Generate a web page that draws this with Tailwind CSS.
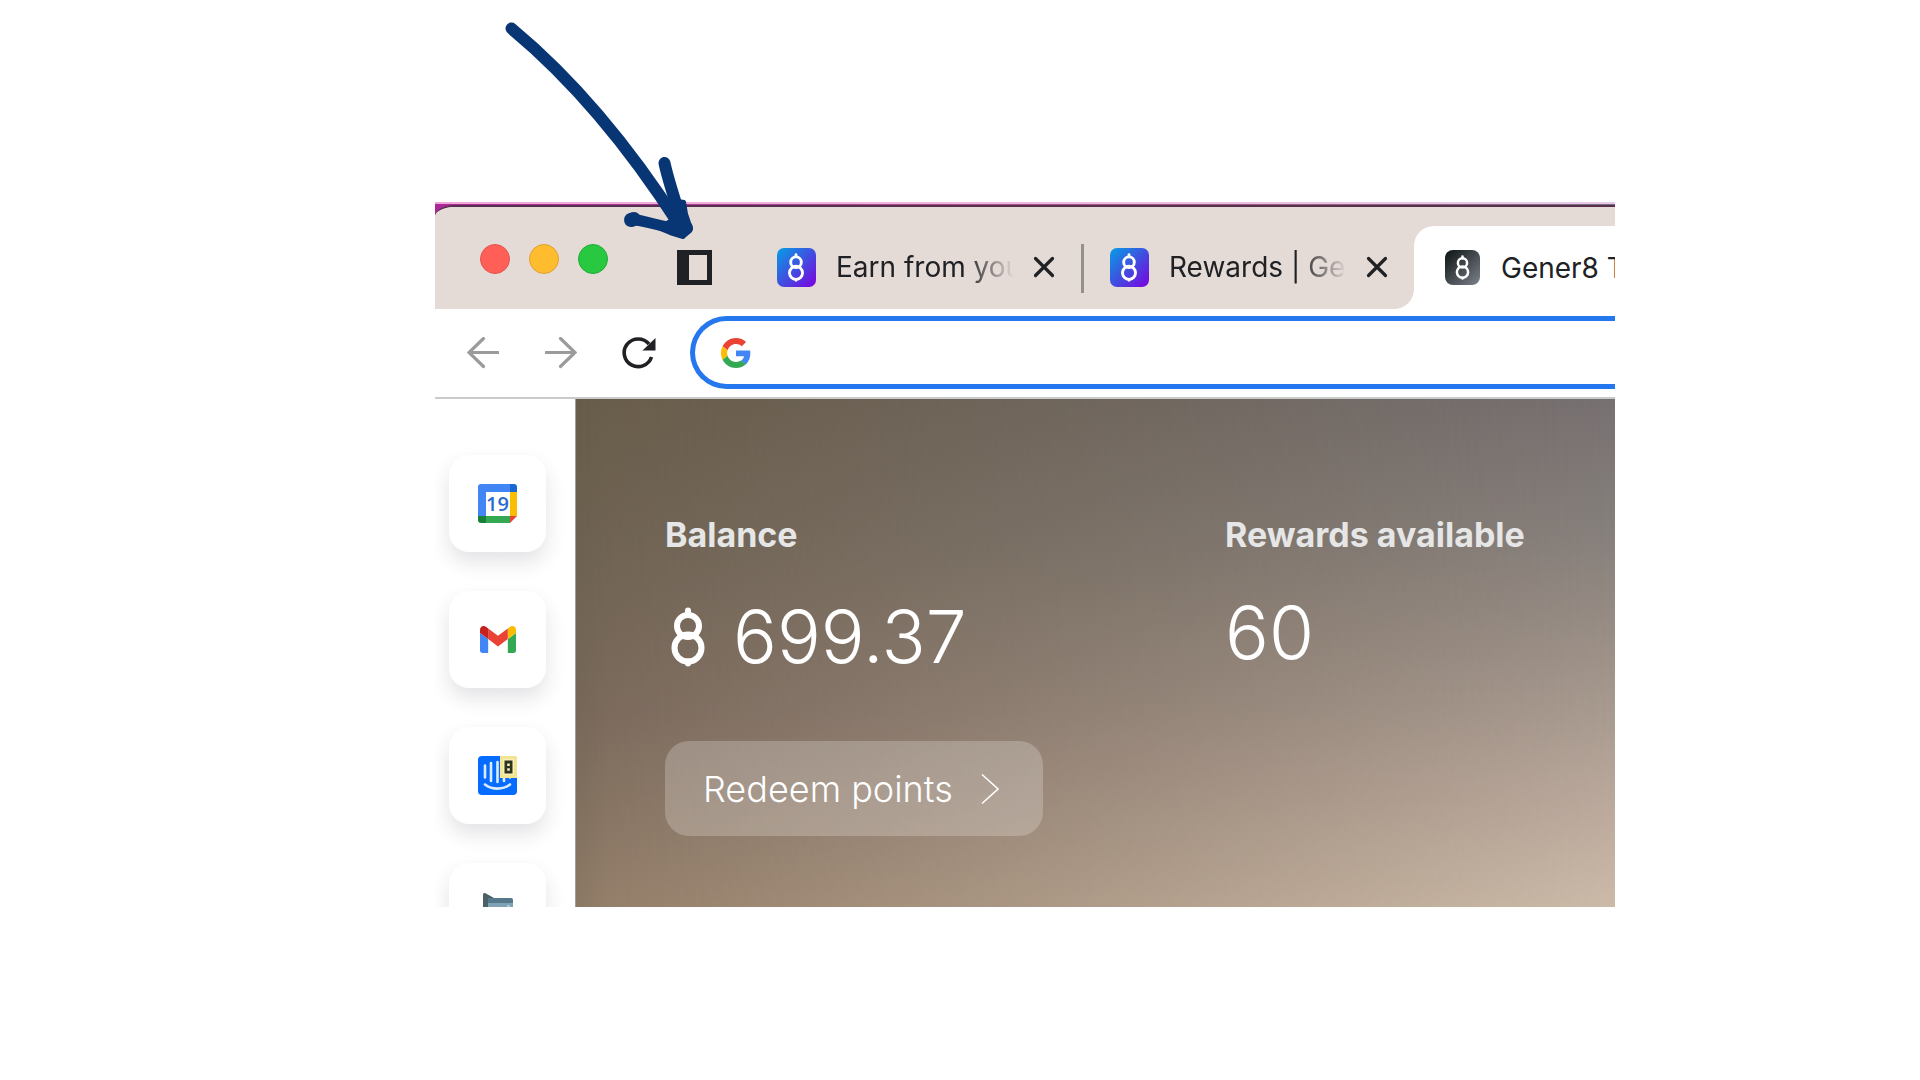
<!DOCTYPE html>
<html lang="en">
<head>
  <meta charset="utf-8">
  <meta name="viewport" content="width=device-width, initial-scale=1">
  <title>Gener8 Tab</title>
  <script src="https://cdn.jsdelivr.net/npm/@tailwindcss/browser@4"></script>
</head>
<body class="relative flex h-screen overflow-hidden bg-white pt-[202px] pr-[305px] pb-[173px] pl-[435px] font-['Inter',sans-serif]">

  <!-- shared symbols -->
  <svg class="absolute size-0" aria-hidden="true">
    <defs>
      <linearGradient id="brand" x1="0" y1="0" x2="1" y2="1">
        <stop offset="0" stop-color="#069ee6"/>
        <stop offset=".5" stop-color="#3f50e0"/>
        <stop offset="1" stop-color="#7d00e0"/>
      </linearGradient>
      <linearGradient id="dark" x1="0" y1="0" x2="1" y2="1">
        <stop offset="0" stop-color="#0b1211"/>
        <stop offset="1" stop-color="#7d828c"/>
      </linearGradient>
    </defs>
    <symbol id="eight" viewBox="0 0 34 60">
      <g fill="none" stroke="currentColor" stroke-width="6" stroke-linecap="round">
        <circle cx="17" cy="19" r="11"/>
        <circle cx="17" cy="41" r="13.500"/>
        <path d="M17 3.500v4M17 54.500v2"/>
      </g>
    </symbol>
  </svg>

  <div class="flex min-w-0 flex-1 flex-col overflow-hidden bg-white">

    <!-- desktop edge above the window -->
    <div class="h-0.5 shrink-0 bg-linear-to-r from-[#efa9d8] to-[#e6cbe9]"></div>
    <div class="shrink-0 bg-linear-to-r from-[#ab2797] via-[#b04f86] to-[#7b6f7c] pt-px">
      <div class="overflow-hidden rounded-tl-[20px_12px] border-t-2 border-[#56304e] bg-white">

        <!-- tab strip -->
        <header class="flex h-[102px]">
          <div class="flex shrink-0 items-center rounded-br-[20px] bg-[#e4dad6] pl-[45px]">
            <div class="mt-0.5 flex gap-[19px]">
              <button aria-label="Close window" class="size-[30px] rounded-full border border-[#e2534c] bg-[#ff5f57]"></button>
              <button aria-label="Minimise window" class="size-[30px] rounded-full border border-[#e0a12f] bg-[#febc2e]"></button>
              <button aria-label="Zoom window" class="size-[30px] rounded-full border border-[#23ab36] bg-[#28c840]"></button>
            </div>
            <button aria-label="Side panel" class="mt-[18px] ml-[69px]">
              <svg class="size-[35px]" viewBox="0 0 35 35"><path fill="#202124" fill-rule="evenodd" d="M0 0h35v35H0zM12 5v25h18V5z"/></svg>
            </button>

            <div class="mt-[18px] ml-[65px] flex items-center">
              <svg class="mr-5 size-[39px]" viewBox="0 0 39 39"><rect width="39" height="39" rx="7" fill="url(#brand)"/><use href="#eight" x="10" y="5" width="18" height="29" class="text-white"/></svg>
              <a href="#" class="w-[180px] overflow-hidden text-[28px] leading-10 whitespace-nowrap text-[#202124] mask-[linear-gradient(to_right,black_72%,transparent_99%)]">Earn from your</a>
              <button aria-label="Close tab" class="ml-[17px]">
                <svg class="size-[22px]" viewBox="0 0 22 22"><path d="M2.500 2.500l17 17M19.500 2.500l-17 17" stroke="#202124" stroke-width="3.200" stroke-linecap="round"/></svg>
              </button>
            </div>
            <div class="mt-5 ml-[26px] h-[49px] w-[3px] bg-[#949090]"></div>
            <div class="mt-[18px] ml-[26px] flex items-center pr-[26px]">
              <svg class="mr-5 size-[39px]" viewBox="0 0 39 39"><rect width="39" height="39" rx="7" fill="url(#brand)"/><use href="#eight" x="10" y="5" width="18" height="29" class="text-white"/></svg>
              <a href="#" class="w-[180px] overflow-hidden text-[28px] leading-10 whitespace-nowrap text-[#202124] mask-[linear-gradient(to_right,black_72%,transparent_99%)]">Rewards | Gener8</a>
              <button aria-label="Close tab" class="ml-[17px]">
                <svg class="size-[22px]" viewBox="0 0 22 22"><path d="M2.500 2.500l17 17M19.500 2.500l-17 17" stroke="#202124" stroke-width="3.200" stroke-linecap="round"/></svg>
              </button>
            </div>
          </div>
          <div class="min-w-0 flex-1 bg-[#e4dad6] pt-[19px]">
            <div class="flex h-full items-center overflow-hidden rounded-tl-[20px] bg-white pl-[31px]">
              <svg class="mr-[21px] size-[35px] shrink-0" viewBox="0 0 35 35"><rect width="35" height="35" rx="8" fill="url(#dark)"/><use href="#eight" x="9" y="5" width="17" height="25" class="text-white"/></svg>
              <a href="#" class="text-[28px] leading-10 whitespace-nowrap text-[#202124]">Gener8 Tab</a>
            </div>
          </div>
        </header>

        <!-- toolbar -->
        <nav class="flex items-center border-b-2 border-[#c9cbca] pt-[7px] pb-2 pl-8">
          <button aria-label="Back">
            <svg class="size-8" viewBox="0 0 32 32" fill="none" stroke="#9b9b9b" stroke-width="3.200" stroke-linecap="round"><path d="M2 15.500h29M16.500 1.500L2 15.500l14.500 14"/></svg>
          </button>
          <button aria-label="Forward" class="ml-[46px]">
            <svg class="size-8" viewBox="0 0 32 32" fill="none" stroke="#9b9b9b" stroke-width="3.200" stroke-linecap="round"><path d="M30 15.500H1M15.500 1.500L30 15.500l-14.500 14"/></svg>
          </button>
          <button aria-label="Reload" class="ml-[45px]">
            <svg class="h-8 w-[34px]" viewBox="0 0 34 32"><path d="M29.500 20A14 13.800 0 1 1 27 7" fill="none" stroke="#202124" stroke-width="3.600"/><path d="M33.500 1v12.500H20.500z" fill="#202124"/></svg>
          </button>
          <div class="ml-[34px] flex h-[73px] min-w-0 flex-1 items-center rounded-l-full border-y-5 border-l-5 border-[#2577ee] pl-[26px]">
            <svg class="size-[30px] shrink-0" viewBox="0 0 48 48">
              <path fill="#ea4335" d="M24 9.500c3.540 0 6.710 1.220 9.210 3.600l6.850-6.850C35.900 2.380 30.470 0 24 0 14.620 0 6.510 5.380 2.560 13.220l7.980 6.190C12.430 13.720 17.740 9.500 24 9.500z"/>
              <path fill="#4285f4" d="M46.980 24.550c0-1.570-.15-3.090-.38-4.550H24v9.020h12.940c-.58 2.960-2.260 5.480-4.780 7.180l7.730 6c4.510-4.180 7.090-10.360 7.090-17.650z"/>
              <path fill="#fbbc05" d="M10.530 28.590c-.48-1.450-.76-2.990-.76-4.590s.27-3.140.76-4.590l-7.980-6.190C.92 16.460 0 20.120 0 24c0 3.880.92 7.540 2.560 10.780l7.970-6.190z"/>
              <path fill="#34a853" d="M24 48c6.480 0 11.930-2.130 15.890-5.810l-7.730-6c-2.150 1.450-4.920 2.300-8.160 2.300-6.260 0-11.570-4.220-13.470-9.910l-7.980 6.190C6.510 42.620 14.620 48 24 48z"/>
            </svg>
            <input type="text" aria-label="Address bar" class="min-w-0 flex-1 pl-5 text-[28px] outline-none">
          </div>
        </nav>
      </div>
    </div>

    <div class="flex min-h-0 flex-1">

      <!-- shortcuts -->
      <aside class="flex w-[140px] shrink-0 flex-col gap-[39px] overflow-hidden pt-14 pl-[14px]">
        <a href="#" aria-label="Calendar" class="flex size-[97px] shrink-0 items-center justify-center rounded-[20px] bg-white shadow-[0_10px_20px_rgba(40,40,60,0.13)]">
          <svg class="size-[39px]" viewBox="0 0 39 39">
            <path fill="#4285f4" d="M3 0h29v8H8v24H0V3a3 3 0 0 1 3-3z"/>
            <path fill="#1967d2" d="M32 0h4a3 3 0 0 1 3 3v5h-7z"/>
            <path fill="#fbbc04" d="M32 8h7v24h-7z"/>
            <path fill="#34a853" d="M8 32h24v7H8z"/>
            <path fill="#188038" d="M0 32h8v7H3a3 3 0 0 1-3-3z"/>
            <path fill="#ea4335" d="M32 32h7l-7 7z"/>
            <path fill="#fff" d="M8 8h24v24H8z"/>
            <text x="19.500" y="27" text-anchor="middle" font-family="Open Sans, sans-serif" font-weight="600" font-size="20" fill="#2a6bd0">19</text>
          </svg>
        </a>
        <a href="#" aria-label="Gmail" class="flex size-[97px] shrink-0 items-center justify-center rounded-[20px] bg-white shadow-[0_10px_20px_rgba(40,40,60,0.13)]">
          <svg class="h-[27px] w-9" viewBox="52 42 88 66">
            <path fill="#4285f4" d="M58 108h14V74L52 59v43c0 3.320 2.690 6 6 6"/>
            <path fill="#34a853" d="M120 108h14c3.320 0 6-2.690 6-6V59l-20 15"/>
            <path fill="#fbbc04" d="M120 48v26l20-15v-8c0-7.420-8.470-11.650-14.400-7.200"/>
            <path fill="#ea4335" d="M72 74V48l24 18 24-18v26L96 92"/>
            <path fill="#c5221f" d="M52 51v8l20 15V48l-5.600-4.200c-5.940-4.450-14.400-.22-14.400 7.200"/>
          </svg>
        </a>
        <a href="#" aria-label="Intercom" class="flex size-[97px] shrink-0 items-center justify-center rounded-[20px] bg-white shadow-[0_10px_20px_rgba(40,40,60,0.13)]">
          <svg class="size-[39px]" viewBox="0 0 39 39">
            <rect width="39" height="39" rx="4" fill="#056cff"/>
            <path d="M7 9.500v12M13 7v18M19.500 6v20M26 7v18M32 9.500v12M7 28.500c7 5.500 18 5.500 25 0" fill="none" stroke="#dcebff" stroke-width="2.600" stroke-linecap="round"/>
            <path fill="#f3e493" d="M22 0h15a2 2 0 0 1 2 2v20H22z"/>
            <path fill="#fbf0b4" d="M25 3h11v16H25z"/>
            <path fill="#2c3320" fill-rule="evenodd" d="M26.500 4.500h8v13h-8zM29.200 7.500v2.500h2.600V7.500zM29.200 12.200v2.500h2.600v-2.500z"/>
          </svg>
        </a>
        <a href="#" aria-label="Shortcut" class="flex size-[97px] shrink-0 items-center justify-center rounded-[20px] bg-white shadow-[0_10px_20px_rgba(40,40,60,0.13)]">
          <svg class="h-[37px] w-[30px]" viewBox="0 0 30 37">
            <path fill="#4d6069" d="M0 1.500C0 0 1 0 2 0l9 5v32H0z"/>
            <path fill="#55788a" d="M5 5h23a2 2 0 0 1 2 2v30H5z"/>
            <path fill="#7fa3b5" d="M5 10h25v27H5z"/>
            <path fill="#a6c4d2" d="M24 12h3v25h-3z"/>
          </svg>
        </a>
      </aside>

      <main class="relative min-w-0 flex-1 border-l border-[#a39d97] bg-[linear-gradient(to_bottom,#695d4a_0%,#706353_30%,#7b6a5c_62%,#937e69_100%)]">
        <div class="absolute inset-0 bg-[linear-gradient(to_bottom,#777071_0%,#87807c_27%,#9d9188_50%,#b6a599_75%,#ccbaa9_100%)] mask-[linear-gradient(to_right,transparent,black)]"></div>
        <div class="absolute inset-y-0 left-0 w-8 bg-linear-to-r from-[#5c5a48]/15 to-transparent"></div>

        <div class="relative flex pt-[116px] pl-[89px] text-white">
          <section class="w-[560px] shrink-0">
            <h2 class="text-[34px] leading-10 font-bold text-[#e6e6e6]">Balance</h2>
            <p class="mt-[42px] flex items-center text-[73px] leading-[80px] font-[350]">
              <svg class="mr-7 ml-1.5 h-[60px] w-[34px]"><use href="#eight"/></svg>
              699.37
            </p>
            <button class="mt-[64px] flex h-[95px] items-center rounded-3xl bg-white/22 pr-11 pl-[38px] text-[36px] font-[350]">
              Redeem points
              <svg class="ml-7 h-8 w-[18px]" viewBox="0 0 18 32"><path d="M1 1.500L17 16 1 30.500" fill="none" stroke="#fff" stroke-width="1.600"/></svg>
            </button>
          </section>
          <section class="min-w-0">
            <h2 class="text-[34px] leading-10 font-bold whitespace-nowrap text-[#e6e6e6]">Rewards available</h2>
            <p class="mt-[38px] text-[73px] leading-[80px] font-[350]">60</p>
          </section>
        </div>
      </main>
    </div>
  </div>

  <!-- pointer to the side panel button -->
  <svg class="pointer-events-none absolute top-5 left-[500px] h-[225px] w-[200px]" viewBox="0 0 200 225" fill="none" stroke="#083573" stroke-linecap="round" stroke-linejoin="round">
    <path stroke-width="12" d="M11.500 8.500C76 62 132 131 180 206"/>
    <path stroke-width="12" d="M164.500 143C168 160 175 180 183 206"/>
    <path stroke-width="11" d="M133 199.500C147 201 160 207 182 209"/>
    <path stroke-width="14" d="M131 200L134 199"/>
    <path stroke-width="4" fill="#083573" d="M172 180L184 182 186 194 191 209 183 217 170 213 158 208 172 200z"/>
    <path stroke-width="14" d="M182 211L186 208"/>
  </svg>
</body>
</html>
